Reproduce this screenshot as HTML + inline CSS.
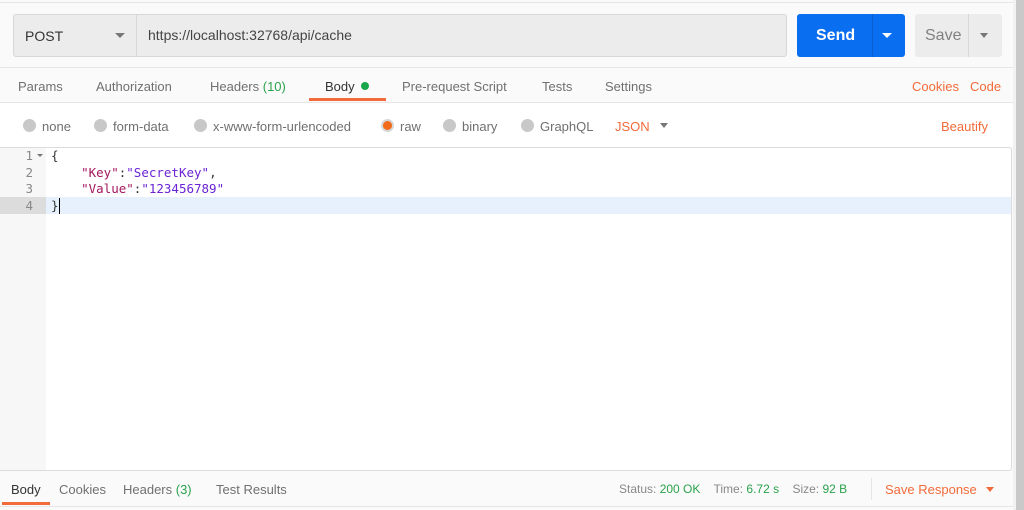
<!DOCTYPE html><html><head><style>
*{margin:0;padding:0;box-sizing:border-box}
body{width:1024px;height:510px;background:#fafafa;font-family:"Liberation Sans",sans-serif;position:relative;overflow:hidden;color:#505050}
.a{position:absolute}
.t{font-size:13px;color:#707070;white-space:nowrap}
.o{color:#f26b3a}
.g{color:#2ba24c}
.rad{position:absolute;width:13px;height:13px;border-radius:50%;background:#c8c8c8;top:119px}
.mono{font-family:"DejaVu Sans Mono","Liberation Mono",monospace;font-size:12.5px}
.ln{position:absolute;left:0;width:40px;text-align:right;color:#888}
</style></head><body>
<div class="a" style="left:0;top:0;width:1013px;height:3px;border-bottom:1px solid #e6e6e6;background:#fafafa"></div>
<div class="a" style="left:1013px;top:0;width:3px;height:510px;background:#f2f2f2"></div>
<div class="a" style="left:1016px;top:0;width:8px;height:510px;background:#c9c9c9"></div>
<!-- url row -->
<div class="a" style="left:13px;top:14px;width:774px;height:43px;background:#ececec;border:1px solid #d8d8d8;border-radius:3px"></div>
<div class="a" style="left:136px;top:15px;width:1px;height:41px;background:#d8d8d8"></div>
<div class="a t" style="left:25px;top:28px;color:#333;font-size:14px">POST</div>
<div class="a" style="left:115px;top:33px;border:5px solid transparent;border-top:5px solid #777;border-bottom:0"></div>
<div class="a t" style="left:148px;top:27px;color:#444;font-size:14px">https://localhost:32768/api/cache</div>
<div class="a" style="left:797px;top:14px;width:108px;height:43px;background:#0a6ef0;border-radius:3px"></div>
<div class="a" style="left:872px;top:14px;width:1px;height:43px;background:#0a5fd0"></div>
<div class="a" style="left:816px;top:27px;color:#fff;font-size:16px;font-weight:bold">Send</div>
<div class="a" style="left:882px;top:33px;border:5px solid transparent;border-top:5px solid #fff;border-bottom:0"></div>
<div class="a" style="left:915px;top:14px;width:87px;height:43px;background:#ececec;border-radius:3px"></div>
<div class="a" style="left:968px;top:14px;width:1px;height:43px;background:#d8d8d8"></div>
<div class="a" style="left:925px;top:27px;color:#808080;font-size:16px">Save</div>
<div class="a" style="left:980px;top:33px;border:4px solid transparent;border-top:5px solid #777;border-bottom:0"></div>
<div class="a" style="left:0;top:67px;width:1013px;height:1px;background:#e6e6e6"></div>
<!-- tabs -->
<div class="a t" style="left:18px;top:79px">Params</div>
<div class="a t" style="left:96px;top:79px">Authorization</div>
<div class="a t" style="left:210px;top:79px">Headers <span class="g">(10)</span></div>
<div class="a t" style="left:325px;top:79px;color:#333">Body</div>
<div class="a" style="left:361px;top:82px;width:8px;height:8px;border-radius:50%;background:#19a64a"></div>
<div class="a" style="left:309px;top:98px;width:77px;height:3px;background:#f26b3a"></div>
<div class="a t" style="left:402px;top:79px">Pre-request Script</div>
<div class="a t" style="left:542px;top:79px">Tests</div>
<div class="a t" style="left:605px;top:79px">Settings</div>
<div class="a t o" style="left:912px;top:79px">Cookies</div>
<div class="a t o" style="left:970px;top:79px">Code</div>
<div class="a" style="left:0;top:102px;width:1013px;height:1px;background:#e6e6e6"></div>
<div class="a" style="left:0;top:103px;width:1013px;height:44px;background:#fff"></div>
<!-- radios -->
<div class="rad" style="left:23px"></div><div class="a t" style="left:42px;top:119px">none</div>
<div class="rad" style="left:94px"></div><div class="a t" style="left:113px;top:119px">form-data</div>
<div class="rad" style="left:194px"></div><div class="a t" style="left:213px;top:119px">x-www-form-urlencoded</div>
<div class="rad" style="left:381px;background:#f26b1a;border:2px solid #d6d6d6"></div><div class="a t" style="left:400px;top:119px">raw</div>
<div class="rad" style="left:443px"></div><div class="a t" style="left:462px;top:119px">binary</div>
<div class="rad" style="left:521px"></div><div class="a t" style="left:540px;top:119px">GraphQL</div>
<div class="a t o" style="left:615px;top:119px">JSON</div>
<div class="a" style="left:660px;top:123px;border:4px solid transparent;border-top:5px solid #777;border-bottom:0"></div>
<div class="a t o" style="left:941px;top:119px">Beautify</div>
<!-- editor -->
<div class="a" style="left:0;top:147px;width:1012px;height:324px;background:#fff;border:1px solid #dcdcdc;border-left:0;border-radius:0 3px 3px 0"></div>
<div class="a" style="left:0;top:148px;width:46px;height:322px;background:#f7f7f7"></div>
<div class="a" style="left:0;top:197px;width:46px;height:17px;background:#dcdcdc"></div>
<div class="a" style="left:46px;top:197px;width:965px;height:17px;background:#e6f1fd"></div>
<div class="a mono" style="left:0;top:148px;width:1010px;line-height:16.5px">
<div class="ln" style="top:0;width:33px">1</div><div class="a" style="left:37px;top:6px;border:3px solid transparent;border-top:3px solid #777;border-bottom:0"></div>
<div class="ln" style="top:16.5px;width:33px">2</div>
<div class="ln" style="top:33px;width:33px">3</div>
<div class="ln" style="top:49.5px;width:33px">4</div>
<div class="a" style="left:51px;top:0;color:#333;white-space:pre">{</div>
<div class="a" style="left:51px;top:16.5px;white-space:pre">    <span style="color:#a3185d">"Key"</span><span style="color:#333">:</span><span style="color:#6a24d4">"SecretKey"</span><span style="color:#333">,</span></div>
<div class="a" style="left:51px;top:33px;white-space:pre">    <span style="color:#a3185d">"Value"</span><span style="color:#333">:</span><span style="color:#6a24d4">"123456789"</span></div>
<div class="a" style="left:51px;top:49.5px;color:#333;white-space:pre">}</div>
<div class="a" style="left:59px;top:50px;width:1px;height:16px;background:#000"></div>
</div>
<!-- bottom -->
<div class="a t" style="left:11px;top:482px;color:#333">Body</div>
<div class="a" style="left:2px;top:502px;width:48px;height:3px;background:#f26b3a"></div>
<div class="a t" style="left:59px;top:482px">Cookies</div>
<div class="a t" style="left:123px;top:482px">Headers <span class="g">(3)</span></div>
<div class="a t" style="left:216px;top:482px">Test Results</div>
<div class="a t" style="left:619px;top:482px;font-size:12px;color:#888">Status: <span class="g">200 OK</span>&nbsp;&nbsp;&nbsp; Time: <span class="g">6.72 s</span>&nbsp;&nbsp;&nbsp; Size: <span class="g">92 B</span></div>
<div class="a" style="left:871px;top:478px;width:1px;height:22px;background:#e6e6e6"></div>
<div class="a t o" style="left:885px;top:482px">Save Response</div>
<div class="a" style="left:986px;top:487px;border:4px solid transparent;border-top:5px solid #f26b3a;border-bottom:0"></div>
<div class="a" style="left:0;top:506px;width:1013px;height:1px;background:#e6e6e6"></div>
</body></html>
